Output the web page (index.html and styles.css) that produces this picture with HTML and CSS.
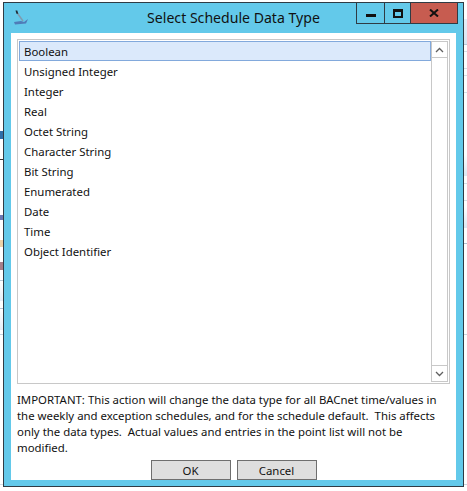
FILE: index.html
```html
<!DOCTYPE html>
<html lang="en">
<head>
<meta charset="utf-8">
<title>Select Schedule Data Type</title>
<link rel="stylesheet" href="styles.css">
</head>
<body>
<div class="backdrop backdrop-left"></div>
<div class="backdrop backdrop-right"></div>
<div class="window">
  <header class="titlebar">
    <svg class="app-icon" width="16" height="16" viewBox="0 0 16 16"><path d="M3.5 2 L10 11" stroke="#7f9bb0" stroke-width="1.5" fill="none"/><path d="M2.5 0.5h1.8l1 3.2h-1.8z" fill="#1d2b36"/><path d="M1 12 L8 11 L11 12 L15 9 L13 13.5 L2 14.5z" fill="#4f7cb8"/></svg>
    <h1 class="title">Select Schedule Data Type</h1>
    <div class="controls">
      <div class="ctl ctl-min"><span class="min-glyph"></span></div>
      <div class="ctl ctl-max"><span class="max-glyph"></span></div>
      <div class="ctl ctl-close"><svg width="10" height="8" viewBox="0 0 10 8"><path d="M1 0.5 L9 7.5 M9 0.5 L1 7.5" stroke="#111" stroke-width="2" fill="none"/></svg></div>
    </div>
  </header>
  <main class="content">
    <div class="listbox">
      <ul class="items">
        <li class="item selected">Boolean</li>
        <li class="item">Unsigned Integer</li>
        <li class="item">Integer</li>
        <li class="item">Real</li>
        <li class="item">Octet String</li>
        <li class="item">Character String</li>
        <li class="item">Bit String</li>
        <li class="item">Enumerated</li>
        <li class="item">Date</li>
        <li class="item">Time</li>
        <li class="item">Object Identifier</li>
      </ul>
      <div class="scrollbar">
        <div class="arrow arrow-up"><svg width="9" height="6" viewBox="0 0 9 6"><path d="M1 5 L4.5 1.5 L8 5" stroke="#606060" stroke-width="1.3" fill="none"/></svg></div>
        <div class="arrow arrow-down"><svg width="9" height="6" viewBox="0 0 9 6"><path d="M1 1 L4.5 4.5 L8 1" stroke="#606060" stroke-width="1.3" fill="none"/></svg></div>
      </div>
    </div>
    <p class="note">IMPORTANT: This action will change the data type for all BACnet time/values in the weekly and exception schedules, and for the schedule default.&nbsp; This affects only the data types.&nbsp; Actual values and entries in the point list will not be modified.</p>
    <div class="buttons">
      <button class="btn">OK</button>
      <button class="btn">Cancel</button>
    </div>
  </main>
</div>
</body>
</html>
```
FILE: styles.css
```css
html, body { margin: 0; padding: 0; width: 467px; height: 491px; overflow: hidden; background: #fff; }
body { position: relative; padding: 2px 3px 4px 3px; box-sizing: border-box; font-family: "Noto Sans", sans-serif; color: #111; }
.backdrop { position: absolute; top: 0; width: 3px; height: 491px; background-repeat: no-repeat; }
.backdrop-left {
  left: 0;
  background-image:
    linear-gradient(#2f6fa8, #2f6fa8), linear-gradient(#333, #333), linear-gradient(#6a78b4, #6a78b4), linear-gradient(#ecd3a8, #ecd3a8), linear-gradient(#a77f8a, #a77f8a),
    linear-gradient(#b4c6d6, #b4c6d6), linear-gradient(#fff, #e4ecf6), linear-gradient(#b4c6d6, #b4c6d6), linear-gradient(#fff, #e4ecf6), linear-gradient(#c4d2de, #c4d2de), linear-gradient(#d4dce4, #d4dce4);
  background-size: 100% 8px, 100% 1px, 100% 5px, 100% 7px, 100% 8px, 100% 1px, 100% 20px, 100% 1px, 100% 21px, 100% 1px, 100% 1px;
  background-position: 0 131px, 0 159px, 0 215px, 0 240px, 0 262px, 0 280px, 0 281px, 0 308px, 0 309px, 0 334px, 0 484px;
}
.backdrop-right {
  right: 0;
  background-image:
    linear-gradient(#e6eef8, #dbe6f2), linear-gradient(#b9c8d8, #b9c8d8), linear-gradient(#d9e0e6, #d9e0e6), linear-gradient(#d9e0e6, #d9e0e6), linear-gradient(#d9e0e6, #d9e0e6), linear-gradient(#d9e0e6, #d9e0e6),
    linear-gradient(#fff, #dde7f2), linear-gradient(#a9b8cc, #a9b8cc), linear-gradient(#d9e0e6, #d9e0e6), linear-gradient(#d9e0e6, #d9e0e6), linear-gradient(#fff, #dde7f2), linear-gradient(#a9b8cc, #a9b8cc), linear-gradient(#b4c2d2, #b4c2d2), linear-gradient(#ccd6e0, #ccd6e0), linear-gradient(#ccd6e0, #ccd6e0);
  background-size: 100% 25px, 100% 1px, 100% 1px, 100% 1px, 100% 1px, 100% 1px, 100% 21px, 100% 1px, 100% 1px, 100% 1px, 100% 21px, 100% 1px, 100% 1px, 100% 1px, 100% 1px;
  background-position: 0 19px, 0 44px, 0 51px, 0 68px, 0 75px, 0 92px, 0 155px, 0 155px, 0 183px, 0 200px, 0 207px, 0 207px, 0 243px, 0 334px, 0 484px;
}
.window { position: relative; height: 100%; box-sizing: border-box; border: 1px solid #2f3b44; background: #63c9ea; padding: 0 7px 6px 7px; display: flex; flex-direction: column; }
.titlebar { height: 30px; flex: none; display: flex; align-items: center; position: relative; }
.app-icon { flex: none; margin-left: 2px; }
.title { flex: 1; margin: 0 0 2px 0; text-align: center; font-size: 14.1px; font-weight: 400; color: #111; padding-right: 18px; }
.controls { position: absolute; right: -2px; top: 0; height: 21px; display: flex; }
.ctl { height: 20px; border: 1px solid #2f3b44; border-top: 0; box-sizing: content-box; display: flex; align-items: center; justify-content: center; margin-left: -1px; }
.ctl-min { width: 27px; }
.ctl-max { width: 25px; }
.ctl-close { width: 46px; background: #c75c50; }
.min-glyph { width: 10px; height: 3px; background: #111; margin-top: 5px; }
.max-glyph { width: 6px; height: 4px; border: 2px solid #111; border-top-width: 3px; }
.content { flex: 1; background: #fff; padding: 6px 6px 0 6px; display: flex; flex-direction: column; min-height: 0; }
.listbox { height: 345px; flex: none; box-sizing: border-box; border: 1px solid #c8c8c8; display: flex; }
.items { flex: 1; margin: 0; padding: 1px 0 0 1px; list-style: none; }
.item { height: 20px; line-height: 20px; padding-top: 1px; font-size: 11.4px; padding-left: 5px; box-sizing: border-box; }
.item.selected { background: #dbe9fb; border: 1px solid #82a9dc; line-height: 19px; padding-left: 4px; padding-top: 0; }
.scrollbar { width: 15px; flex: none; margin: 1px 1px 1px 0; border: 1px solid #c8c8c8; display: flex; flex-direction: column; justify-content: space-between; }
.arrow { height: 15px; display: flex; align-items: center; justify-content: center; }
.arrow-up { border-bottom: 1px solid #c8c8c8; }
.arrow-down { border-top: 1px solid #c8c8c8; }
.note { margin: 8px 0 0 0; font-size: 11.4px; line-height: 16px; color: #111; }
.buttons { display: flex; justify-content: center; gap: 6px; margin-top: 4px; }
.btn { width: 80px; height: 20px; padding: 0; box-sizing: border-box; border: 1px solid #6e6e6e; background: #dedede; font: 11.4px "Noto Sans", sans-serif; color: #111; }
```
